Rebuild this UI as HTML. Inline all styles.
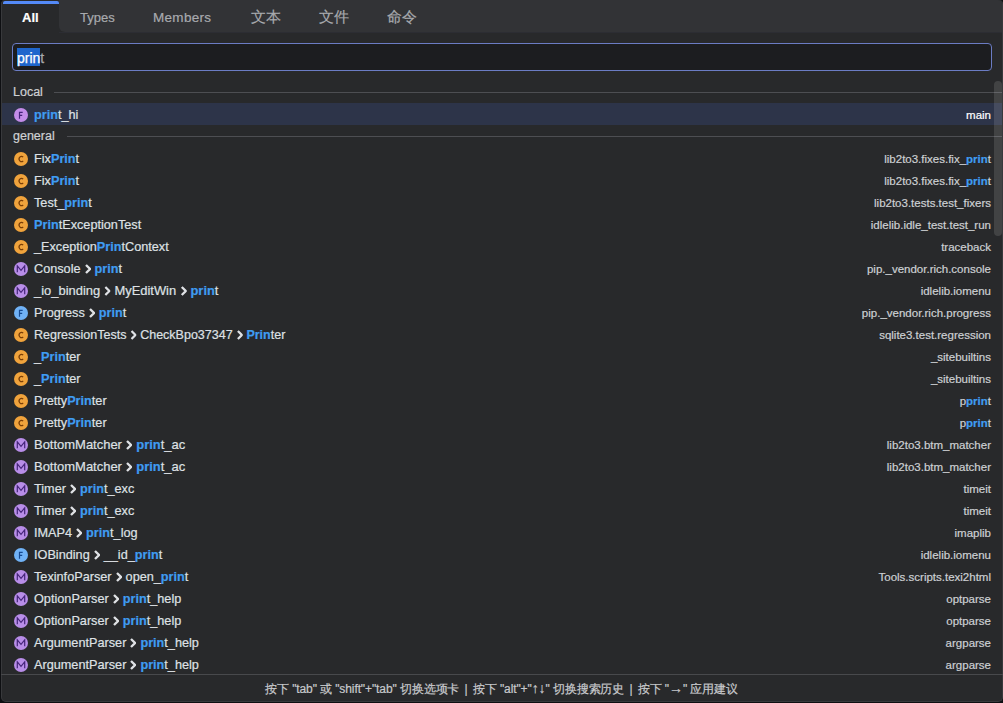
<!DOCTYPE html>
<html><head><meta charset="utf-8"><style>
html,body{margin:0;padding:0}
body{width:1003px;height:703px;overflow:hidden;background:#0e0f12;position:relative;font-family:"Liberation Sans",sans-serif;}
.abs{position:absolute}
#frame{left:1px;top:0;width:1000px;height:701px;border:1px solid #38393c;border-top:none;border-radius:4px 4px 5px 5px;background:#28292b}
#strip{left:59px;top:0;width:943px;height:32px;background:#323336;border-bottom-left-radius:6px;border-top-right-radius:4px}
#bluebar{left:3px;top:1px;width:56px;height:3px;background:#548af7;border-radius:2px 2px 0 0}
.tab{position:absolute;top:10px;font-size:13px;line-height:15px;color:#a8aaae;white-space:nowrap;-webkit-text-stroke:0.2px currentColor}
.tab.cjk{font-size:14.5px}
.tab.act{color:#ffffff;font-weight:bold}
#search{left:12px;top:43px;width:978px;height:26px;border:1px solid #6b7cc4;border-radius:4px;background:#1c1d20}
#q{position:absolute;left:4px;top:4px;font-size:14px;line-height:18px;color:#ffffff;white-space:nowrap;-webkit-text-stroke:0.25px currentColor}
#q span{display:inline-block;padding-top:1px;height:17px;line-height:18px}
#q .selt{background:#1f66cc;color:#fff}
#q .sug{color:#a8a8ab;background:transparent}
.hdr{position:absolute;left:13px;font-size:12.5px;line-height:22px;height:22px;color:#cfd1d4;white-space:nowrap;-webkit-text-stroke:0.2px currentColor}
.hline{position:absolute;height:1px;background:#4d4e52}
.row{position:absolute;left:2px;width:1000px;height:22px}
.row.sel{background:#2d3449}
.row.sel .r{color:#ffffff}

.ic{display:block;position:absolute;left:12px;top:5px;width:14px;height:14px}
.l{position:absolute;left:32px;top:1px;line-height:22px;font-size:12.7px;color:#dfe1e5;white-space:nowrap;-webkit-text-stroke:0.2px currentColor}
.r{position:absolute;right:11px;top:1px;line-height:22px;font-size:11.5px;color:#cdd0d3;white-space:nowrap;-webkit-text-stroke:0.2px currentColor}
b{color:#3f9cf2;font-weight:bold}
.chev{display:inline-block;margin:0 4px 0 4px;vertical-align:-1px}
#scroll{left:994px;top:81px;width:8px;height:155px;background:rgba(255,255,255,0.12);border-radius:4px}
#footer .bar{margin:0 2px}
#footer .arr{font-size:14px;font-weight:bold;line-height:10px}
#stripline{left:59px;top:32px;width:943px;height:1px;background:#2c2d33}
#fsep{left:1px;top:674px;width:1002px;height:1px;background:#48494c}
#footer{left:0;top:680px;width:1003px;text-align:center;font-size:12px;line-height:18px;color:#c8cacd;white-space:nowrap;letter-spacing:-0.1px;-webkit-text-stroke:0.2px currentColor}
</style></head><body>
<div class="abs" id="frame"></div>
<div class="abs" id="strip"></div>
<div class="abs" id="bluebar"></div><div class="abs" id="stripline"></div>
<div class="tab act" style="left:22px">All</div>
<div class="tab" style="left:80px">Types</div>
<div class="tab" style="left:153px;letter-spacing:0.3px;font-size:13.5px">Members</div>
<div class="tab cjk" style="left:251px">文本</div>
<div class="tab cjk" style="left:319px">文件</div>
<div class="tab cjk" style="left:387px">命令</div>
<div class="abs" id="search"><div id="q"><span class="selt">prin</span><span class="sug">t</span></div></div>
<div class="hdr" style="top:81px">Local</div><div class="hline" style="left:54px;top:92px;width:948px"></div>
<div class="hdr" style="top:125px">general</div><div class="hline" style="left:67px;top:136px;width:935px"></div>
<div class="row sel" style="top:103px"><svg class="ic" width="14" height="14" viewBox="0 0 14 14"><circle cx="7" cy="7" r="7" fill="#c38ce8"/><path d="M5.5 10.8V4.3H8.7M5.5 7.4H8.2" fill="none" stroke="#45247a" stroke-width="1.2" stroke-linejoin="miter"/></svg><span class="l"><b>prin</b>t_hi</span><span class="r">main</span></div>
<div class="row" style="top:147px"><svg class="ic" width="14" height="14" viewBox="0 0 14 14"><circle cx="7" cy="7" r="7" fill="#f0a33c"/><path d="M9.2 5.0A2.5 2.6 0 1 0 9.2 9.0" fill="none" stroke="#7a3e06" stroke-width="1.2" stroke-linejoin="miter"/></svg><span class="l">Fix<b>Prin</b>t</span><span class="r">lib2to3.fixes.fix_<b>prin</b>t</span></div>
<div class="row" style="top:169px"><svg class="ic" width="14" height="14" viewBox="0 0 14 14"><circle cx="7" cy="7" r="7" fill="#f0a33c"/><path d="M9.2 5.0A2.5 2.6 0 1 0 9.2 9.0" fill="none" stroke="#7a3e06" stroke-width="1.2" stroke-linejoin="miter"/></svg><span class="l">Fix<b>Prin</b>t</span><span class="r">lib2to3.fixes.fix_<b>prin</b>t</span></div>
<div class="row" style="top:191px"><svg class="ic" width="14" height="14" viewBox="0 0 14 14"><circle cx="7" cy="7" r="7" fill="#f0a33c"/><path d="M9.2 5.0A2.5 2.6 0 1 0 9.2 9.0" fill="none" stroke="#7a3e06" stroke-width="1.2" stroke-linejoin="miter"/></svg><span class="l">Test_<b>prin</b>t</span><span class="r">lib2to3.tests.test_fixers</span></div>
<div class="row" style="top:213px"><svg class="ic" width="14" height="14" viewBox="0 0 14 14"><circle cx="7" cy="7" r="7" fill="#f0a33c"/><path d="M9.2 5.0A2.5 2.6 0 1 0 9.2 9.0" fill="none" stroke="#7a3e06" stroke-width="1.2" stroke-linejoin="miter"/></svg><span class="l"><b>Prin</b>tExceptionTest</span><span class="r">idlelib.idle_test.test_run</span></div>
<div class="row" style="top:235px"><svg class="ic" width="14" height="14" viewBox="0 0 14 14"><circle cx="7" cy="7" r="7" fill="#f0a33c"/><path d="M9.2 5.0A2.5 2.6 0 1 0 9.2 9.0" fill="none" stroke="#7a3e06" stroke-width="1.2" stroke-linejoin="miter"/></svg><span class="l">_Exception<b>Prin</b>tContext</span><span class="r">traceback</span></div>
<div class="row" style="top:257px"><svg class="ic" width="14" height="14" viewBox="0 0 14 14"><circle cx="7" cy="7" r="7" fill="#b88de8"/><path d="M3.3 10.2V3.9L7 8.3L10.7 3.9V10.2" fill="none" stroke="#45247a" stroke-width="1.2" stroke-linejoin="miter"/></svg><span class="l">Console<svg class="chev" width="6" height="10" viewBox="0 0 6 10"><path d="M1 1 L5 5 L1 9" fill="none" stroke="#dfe1e5" stroke-width="2.3"/></svg><b>prin</b>t</span><span class="r">pip._vendor.rich.console</span></div>
<div class="row" style="top:279px"><svg class="ic" width="14" height="14" viewBox="0 0 14 14"><circle cx="7" cy="7" r="7" fill="#b88de8"/><path d="M3.3 10.2V3.9L7 8.3L10.7 3.9V10.2" fill="none" stroke="#45247a" stroke-width="1.2" stroke-linejoin="miter"/></svg><span class="l" style="transform:scaleX(1.019);transform-origin:0 0">_io_binding<svg class="chev" width="6" height="10" viewBox="0 0 6 10"><path d="M1 1 L5 5 L1 9" fill="none" stroke="#dfe1e5" stroke-width="2.3"/></svg>MyEditWin<svg class="chev" width="6" height="10" viewBox="0 0 6 10"><path d="M1 1 L5 5 L1 9" fill="none" stroke="#dfe1e5" stroke-width="2.3"/></svg><b>prin</b>t</span><span class="r">idlelib.iomenu</span></div>
<div class="row" style="top:301px"><svg class="ic" width="14" height="14" viewBox="0 0 14 14"><circle cx="7" cy="7" r="7" fill="#70b2f6"/><path d="M5.5 10.8V4.3H8.7M5.5 7.4H8.2" fill="none" stroke="#154a92" stroke-width="1.2" stroke-linejoin="miter"/></svg><span class="l">Progress<svg class="chev" width="6" height="10" viewBox="0 0 6 10"><path d="M1 1 L5 5 L1 9" fill="none" stroke="#dfe1e5" stroke-width="2.3"/></svg><b>prin</b>t</span><span class="r">pip._vendor.rich.progress</span></div>
<div class="row" style="top:323px"><svg class="ic" width="14" height="14" viewBox="0 0 14 14"><circle cx="7" cy="7" r="7" fill="#f0a33c"/><path d="M9.2 5.0A2.5 2.6 0 1 0 9.2 9.0" fill="none" stroke="#7a3e06" stroke-width="1.2" stroke-linejoin="miter"/></svg><span class="l" style="transform:scaleX(0.985);transform-origin:0 0">RegressionTests<svg class="chev" width="6" height="10" viewBox="0 0 6 10"><path d="M1 1 L5 5 L1 9" fill="none" stroke="#dfe1e5" stroke-width="2.3"/></svg>CheckBpo37347<svg class="chev" width="6" height="10" viewBox="0 0 6 10"><path d="M1 1 L5 5 L1 9" fill="none" stroke="#dfe1e5" stroke-width="2.3"/></svg><b>Prin</b>ter</span><span class="r">sqlite3.test.regression</span></div>
<div class="row" style="top:345px"><svg class="ic" width="14" height="14" viewBox="0 0 14 14"><circle cx="7" cy="7" r="7" fill="#f0a33c"/><path d="M9.2 5.0A2.5 2.6 0 1 0 9.2 9.0" fill="none" stroke="#7a3e06" stroke-width="1.2" stroke-linejoin="miter"/></svg><span class="l">_<b>Prin</b>ter</span><span class="r">_sitebuiltins</span></div>
<div class="row" style="top:367px"><svg class="ic" width="14" height="14" viewBox="0 0 14 14"><circle cx="7" cy="7" r="7" fill="#f0a33c"/><path d="M9.2 5.0A2.5 2.6 0 1 0 9.2 9.0" fill="none" stroke="#7a3e06" stroke-width="1.2" stroke-linejoin="miter"/></svg><span class="l">_<b>Prin</b>ter</span><span class="r">_sitebuiltins</span></div>
<div class="row" style="top:389px"><svg class="ic" width="14" height="14" viewBox="0 0 14 14"><circle cx="7" cy="7" r="7" fill="#f0a33c"/><path d="M9.2 5.0A2.5 2.6 0 1 0 9.2 9.0" fill="none" stroke="#7a3e06" stroke-width="1.2" stroke-linejoin="miter"/></svg><span class="l">Pretty<b>Prin</b>ter</span><span class="r">p<b>prin</b>t</span></div>
<div class="row" style="top:411px"><svg class="ic" width="14" height="14" viewBox="0 0 14 14"><circle cx="7" cy="7" r="7" fill="#f0a33c"/><path d="M9.2 5.0A2.5 2.6 0 1 0 9.2 9.0" fill="none" stroke="#7a3e06" stroke-width="1.2" stroke-linejoin="miter"/></svg><span class="l">Pretty<b>Prin</b>ter</span><span class="r">p<b>prin</b>t</span></div>
<div class="row" style="top:433px"><svg class="ic" width="14" height="14" viewBox="0 0 14 14"><circle cx="7" cy="7" r="7" fill="#b88de8"/><path d="M3.3 10.2V3.9L7 8.3L10.7 3.9V10.2" fill="none" stroke="#45247a" stroke-width="1.2" stroke-linejoin="miter"/></svg><span class="l" style="transform:scaleX(1.022);transform-origin:0 0">BottomMatcher<svg class="chev" width="6" height="10" viewBox="0 0 6 10"><path d="M1 1 L5 5 L1 9" fill="none" stroke="#dfe1e5" stroke-width="2.3"/></svg><b>prin</b>t_ac</span><span class="r">lib2to3.btm_matcher</span></div>
<div class="row" style="top:455px"><svg class="ic" width="14" height="14" viewBox="0 0 14 14"><circle cx="7" cy="7" r="7" fill="#b88de8"/><path d="M3.3 10.2V3.9L7 8.3L10.7 3.9V10.2" fill="none" stroke="#45247a" stroke-width="1.2" stroke-linejoin="miter"/></svg><span class="l" style="transform:scaleX(1.022);transform-origin:0 0">BottomMatcher<svg class="chev" width="6" height="10" viewBox="0 0 6 10"><path d="M1 1 L5 5 L1 9" fill="none" stroke="#dfe1e5" stroke-width="2.3"/></svg><b>prin</b>t_ac</span><span class="r">lib2to3.btm_matcher</span></div>
<div class="row" style="top:477px"><svg class="ic" width="14" height="14" viewBox="0 0 14 14"><circle cx="7" cy="7" r="7" fill="#b88de8"/><path d="M3.3 10.2V3.9L7 8.3L10.7 3.9V10.2" fill="none" stroke="#45247a" stroke-width="1.2" stroke-linejoin="miter"/></svg><span class="l">Timer<svg class="chev" width="6" height="10" viewBox="0 0 6 10"><path d="M1 1 L5 5 L1 9" fill="none" stroke="#dfe1e5" stroke-width="2.3"/></svg><b>prin</b>t_exc</span><span class="r">timeit</span></div>
<div class="row" style="top:499px"><svg class="ic" width="14" height="14" viewBox="0 0 14 14"><circle cx="7" cy="7" r="7" fill="#b88de8"/><path d="M3.3 10.2V3.9L7 8.3L10.7 3.9V10.2" fill="none" stroke="#45247a" stroke-width="1.2" stroke-linejoin="miter"/></svg><span class="l">Timer<svg class="chev" width="6" height="10" viewBox="0 0 6 10"><path d="M1 1 L5 5 L1 9" fill="none" stroke="#dfe1e5" stroke-width="2.3"/></svg><b>prin</b>t_exc</span><span class="r">timeit</span></div>
<div class="row" style="top:521px"><svg class="ic" width="14" height="14" viewBox="0 0 14 14"><circle cx="7" cy="7" r="7" fill="#b88de8"/><path d="M3.3 10.2V3.9L7 8.3L10.7 3.9V10.2" fill="none" stroke="#45247a" stroke-width="1.2" stroke-linejoin="miter"/></svg><span class="l">IMAP4<svg class="chev" width="6" height="10" viewBox="0 0 6 10"><path d="M1 1 L5 5 L1 9" fill="none" stroke="#dfe1e5" stroke-width="2.3"/></svg><b>prin</b>t_log</span><span class="r">imaplib</span></div>
<div class="row" style="top:543px"><svg class="ic" width="14" height="14" viewBox="0 0 14 14"><circle cx="7" cy="7" r="7" fill="#70b2f6"/><path d="M5.5 10.8V4.3H8.7M5.5 7.4H8.2" fill="none" stroke="#154a92" stroke-width="1.2" stroke-linejoin="miter"/></svg><span class="l">IOBinding<svg class="chev" width="6" height="10" viewBox="0 0 6 10"><path d="M1 1 L5 5 L1 9" fill="none" stroke="#dfe1e5" stroke-width="2.3"/></svg>__id_<b>prin</b>t</span><span class="r">idlelib.iomenu</span></div>
<div class="row" style="top:565px"><svg class="ic" width="14" height="14" viewBox="0 0 14 14"><circle cx="7" cy="7" r="7" fill="#b88de8"/><path d="M3.3 10.2V3.9L7 8.3L10.7 3.9V10.2" fill="none" stroke="#45247a" stroke-width="1.2" stroke-linejoin="miter"/></svg><span class="l">TexinfoParser<svg class="chev" width="6" height="10" viewBox="0 0 6 10"><path d="M1 1 L5 5 L1 9" fill="none" stroke="#dfe1e5" stroke-width="2.3"/></svg>open_<b>prin</b>t</span><span class="r">Tools.scripts.texi2html</span></div>
<div class="row" style="top:587px"><svg class="ic" width="14" height="14" viewBox="0 0 14 14"><circle cx="7" cy="7" r="7" fill="#b88de8"/><path d="M3.3 10.2V3.9L7 8.3L10.7 3.9V10.2" fill="none" stroke="#45247a" stroke-width="1.2" stroke-linejoin="miter"/></svg><span class="l">OptionParser<svg class="chev" width="6" height="10" viewBox="0 0 6 10"><path d="M1 1 L5 5 L1 9" fill="none" stroke="#dfe1e5" stroke-width="2.3"/></svg><b>prin</b>t_help</span><span class="r">optparse</span></div>
<div class="row" style="top:609px"><svg class="ic" width="14" height="14" viewBox="0 0 14 14"><circle cx="7" cy="7" r="7" fill="#b88de8"/><path d="M3.3 10.2V3.9L7 8.3L10.7 3.9V10.2" fill="none" stroke="#45247a" stroke-width="1.2" stroke-linejoin="miter"/></svg><span class="l">OptionParser<svg class="chev" width="6" height="10" viewBox="0 0 6 10"><path d="M1 1 L5 5 L1 9" fill="none" stroke="#dfe1e5" stroke-width="2.3"/></svg><b>prin</b>t_help</span><span class="r">optparse</span></div>
<div class="row" style="top:631px"><svg class="ic" width="14" height="14" viewBox="0 0 14 14"><circle cx="7" cy="7" r="7" fill="#b88de8"/><path d="M3.3 10.2V3.9L7 8.3L10.7 3.9V10.2" fill="none" stroke="#45247a" stroke-width="1.2" stroke-linejoin="miter"/></svg><span class="l">ArgumentParser<svg class="chev" width="6" height="10" viewBox="0 0 6 10"><path d="M1 1 L5 5 L1 9" fill="none" stroke="#dfe1e5" stroke-width="2.3"/></svg><b>prin</b>t_help</span><span class="r">argparse</span></div>
<div class="row" style="top:653px"><svg class="ic" width="14" height="14" viewBox="0 0 14 14"><circle cx="7" cy="7" r="7" fill="#b88de8"/><path d="M3.3 10.2V3.9L7 8.3L10.7 3.9V10.2" fill="none" stroke="#45247a" stroke-width="1.2" stroke-linejoin="miter"/></svg><span class="l">ArgumentParser<svg class="chev" width="6" height="10" viewBox="0 0 6 10"><path d="M1 1 L5 5 L1 9" fill="none" stroke="#dfe1e5" stroke-width="2.3"/></svg><b>prin</b>t_help</span><span class="r">argparse</span></div>
<div class="abs" id="scroll"></div>
<div class="abs" id="fsep"></div>
<div class="abs" id="footer">按下 "tab" 或 "shift"+"tab" 切换选项卡 <span class="bar">|</span> 按下 "alt"+"<span class="arr">↑↓</span>" 切换搜索历史 <span class="bar">|</span> 按下 "<span class="arr">→</span>" 应用建议</div>
</body></html>
